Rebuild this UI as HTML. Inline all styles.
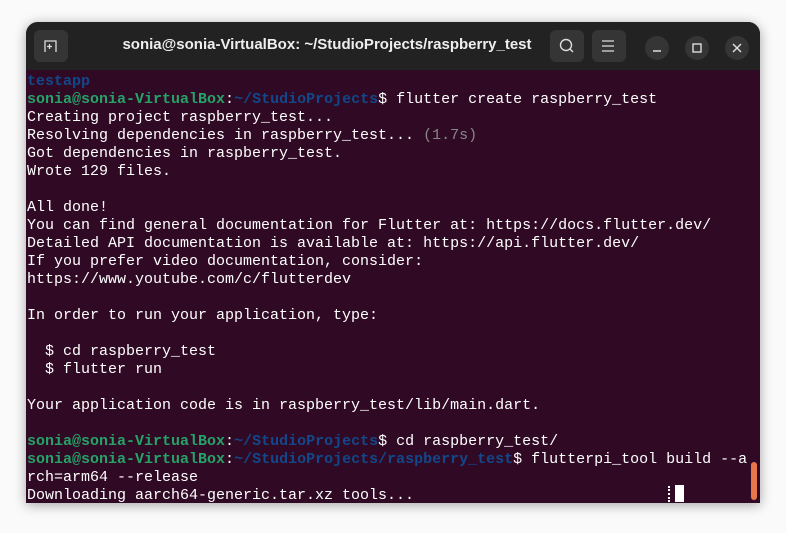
<!DOCTYPE html>
<html><head><style>
body{margin:0;width:786px;height:533px;background:#fafafa;position:relative;overflow:hidden;font-family:"Liberation Sans",sans-serif}
.win{position:absolute;left:26px;top:22px;width:734px;height:481px;border-radius:12px 12px 0 0;background:#300a24;box-shadow:0 2px 12px rgba(0,0,0,.35);overflow:hidden}
.tb{position:absolute;left:0;top:0;width:734px;height:48px;background:#222}
.btn{position:absolute;top:8px;width:34px;height:32px;background:#353535;border-radius:6px}
.cb{position:absolute;top:14px;width:24px;height:24px;border-radius:50%;background:#353535}
.title{position:absolute;left:0;width:602px;top:14px;text-align:center;color:#eee;font-weight:bold;font-size:15px;white-space:nowrap}
pre{position:absolute;left:1px;top:51px;margin:0;font:15px/18px "Liberation Mono",monospace;color:#fff;letter-spacing:0}
.g{color:#26a269;font-weight:bold}.b{color:#12488b;font-weight:bold}.d{color:#888}
</style></head><body>
<div class="win">
<div class="tb">
<div class="btn" style="left:8px"><svg width="34" height="32"><path d="M11 22V11h11v11M13 16.5h5M15.5 14v5" stroke="#ddd" stroke-width="1.3" fill="none"/></svg></div>
<div class="title">sonia@sonia-VirtualBox: ~/StudioProjects/raspberry_test</div>
<div class="btn" style="left:524px"><svg width="34" height="32"><circle cx="16" cy="15" r="5.5" stroke="#ddd" stroke-width="1.4" fill="none"/><path d="M20 19l3 3" stroke="#ddd" stroke-width="1.4"/></svg></div>
<div class="btn" style="left:566px"><svg width="34" height="32"><path d="M10 11h12M10 16h12M10 21h12" stroke="#ddd" stroke-width="1.3"/></svg></div>
<div class="cb" style="left:619px"><svg width="24" height="24"><path d="M8 15h8" stroke="#ddd" stroke-width="1.5"/></svg></div>
<div class="cb" style="left:659px"><svg width="24" height="24"><rect x="8" y="8" width="8" height="8" stroke="#ddd" stroke-width="1.4" fill="none"/></svg></div>
<div class="cb" style="left:699px"><svg width="24" height="24"><path d="M8 8l8 8M16 8l-8 8" stroke="#ddd" stroke-width="1.5"/></svg></div>
</div>
<pre><span class="b">testapp</span>
<span class="g">sonia@sonia-VirtualBox</span>:<span class="b">~/StudioProjects</span>$ flutter create raspberry_test
Creating project raspberry_test...
Resolving dependencies in raspberry_test... <span class="d">(1.7s)</span>
Got dependencies in raspberry_test.
Wrote 129 files.

All done!
You can find general documentation for Flutter at: https://docs.flutter.dev/
Detailed API documentation is available at: https://api.flutter.dev/
If you prefer video documentation, consider:
https://www.youtube.com/c/flutterdev

In order to run your application, type:

  $ cd raspberry_test
  $ flutter run

Your application code is in raspberry_test/lib/main.dart.

<span class="g">sonia@sonia-VirtualBox</span>:<span class="b">~/StudioProjects</span>$ cd raspberry_test/
<span class="g">sonia@sonia-VirtualBox</span>:<span class="b">~/StudioProjects/raspberry_test</span>$ flutterpi_tool build --a
rch=arm64 --release
Downloading aarch64-generic.tar.xz tools...</pre>
<div style="position:absolute;left:642px;top:464px;width:4px;height:16px;border-left:2px dotted #fff"></div>
<div style="position:absolute;left:649px;top:463px;width:9px;height:17px;background:#fff"></div>
<div style="position:absolute;left:725px;top:440px;width:6px;height:38px;border-radius:3px;background:#e9754a"></div>
</div>
</body></html>
